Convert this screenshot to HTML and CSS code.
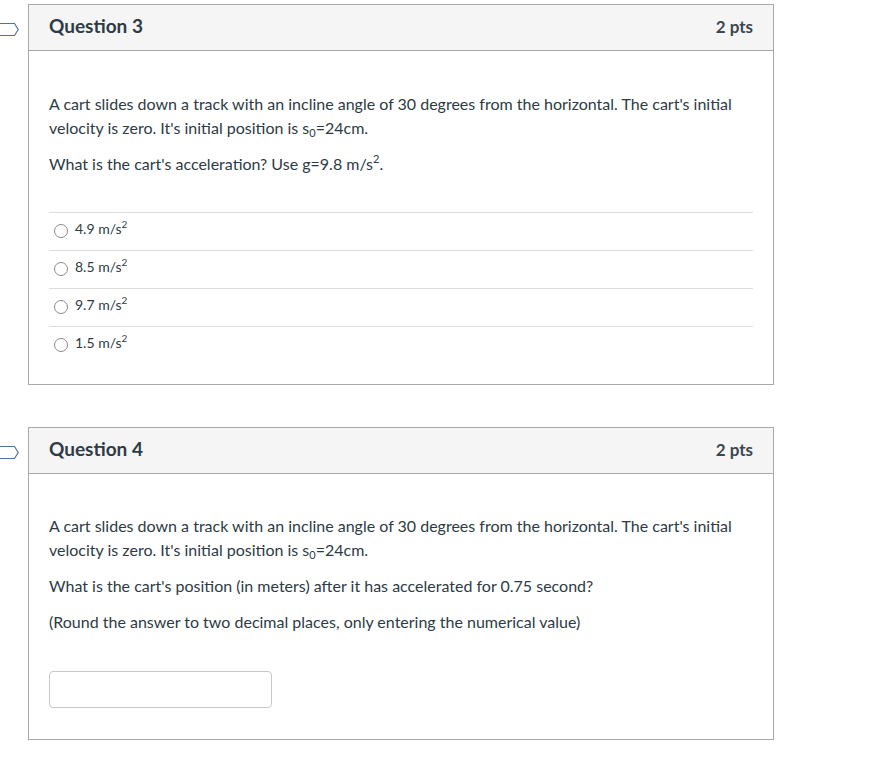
FILE: index.html
```html
<!DOCTYPE html>
<html>
<head>
<meta charset="utf-8">
<link rel="stylesheet" href="styles.css">
</head>
<body>
<div class="page">
  <div class="question-wrap">
    <svg class="marker" width="20" height="16" viewBox="0 0 20 16"><path d="M0 1.5 H14.5 L18.2 7.5 L14.5 13.5 H0" fill="none" stroke="#4f7396" stroke-width="1.2"/></svg>
    <div class="question">
      <div class="q-header">
        <span class="q-name">Question 3</span>
        <span class="q-pts">2 pts</span>
      </div>
      <div class="q-body">
        <p>A cart slides down a track with an incline angle of 30 degrees from the horizontal. The cart's initial velocity is zero. It's initial position is s<sub>0</sub>=24cm.</p>
        <p>What is the cart's acceleration? Use g=9.8 m/s<sup>2</sup>.</p>
        <div class="answers">
          <div class="answer"><span class="radio"></span><span class="label">4.9 m/s<sup>2</sup></span></div>
          <div class="answer"><span class="radio"></span><span class="label">8.5 m/s<sup>2</sup></span></div>
          <div class="answer"><span class="radio"></span><span class="label">9.7 m/s<sup>2</sup></span></div>
          <div class="answer"><span class="radio"></span><span class="label">1.5 m/s<sup>2</sup></span></div>
        </div>
      </div>
    </div>
  </div>

  <div class="question-wrap second">
    <svg class="marker" width="20" height="16" viewBox="0 0 20 16"><path d="M0 1.5 H14.5 L18.2 7.5 L14.5 13.5 H0" fill="none" stroke="#4f7396" stroke-width="1.2"/></svg>
    <div class="question">
      <div class="q-header">
        <span class="q-name">Question 4</span>
        <span class="q-pts">2 pts</span>
      </div>
      <div class="q-body short">
        <p>A cart slides down a track with an incline angle of 30 degrees from the horizontal. The cart's initial velocity is zero. It's initial position is s<sub>0</sub>=24cm.</p>
        <p>What is the cart's position (in meters) after it has accelerated for 0.75 second?</p>
        <p>(Round the answer to two decimal places, only entering the numerical value)</p>
        <div class="input-row"><div class="text-input"></div></div>
      </div>
    </div>
  </div>
</div>
</body>
</html>
```

FILE: styles.css
```css
html, body {
  margin: 0;
  padding: 0;
  background: #ffffff;
}
body {
  font-family: Lato, "Open Sans", sans-serif;
  color: #2d3b45;
}
.page {
  padding-top: 4px;
  width: 889px;
}
.question-wrap {
  position: relative;
  padding-left: 28px;
  width: 746px;
}
.question-wrap.second {
  margin-top: 42px;
}
.marker {
  position: absolute;
  left: 0;
  top: 18px;
}
.question {
  border: 1px solid #a9a9a9;
  background: #fff;
}
.q-header {
  display: flex;
  justify-content: space-between;
  align-items: center;
  padding: 0 20px 5px 20px;
  box-sizing: border-box;
  height: 46px;
  background: #f5f5f5;
  border-bottom: 1px solid #a9a9a9;
  font-weight: 700;
}
.q-name {
  font-size: 19px;
}
.q-pts {
  font-size: 17px;
  color: #3a4750;
  padding-top: 2px;
}
.q-body {
  padding: 41px 20px 20px 20px;
  font-size: 16px;
  line-height: 24px;
}
.q-body.short {
  padding-top: 40px;
}
.q-body p {
  margin: 0 0 12px 0;
}
sub {
  font-size: 11px;
  line-height: 0;
  vertical-align: -3px;
}
sup {
  font-size: 11px;
  line-height: 0;
  vertical-align: 7px;
}
.answers {
  margin-top: 36px;
}
.answer {
  display: flex;
  align-items: center;
  height: 37px;
  border-top: 1px solid #dcdcdc;
  font-size: 14px;
  padding-left: 5px;
  gap: 7px;
}
.label {
  padding-bottom: 6px;
}
.answer sup {
  font-size: 10px;
  vertical-align: 6px;
}
.radio {
  width: 12px;
  height: 12px;
  border: 1px solid #8a8a8a;
  border-radius: 50%;
  background: #fff;
  margin-bottom: 2px;
}
.input-row {
  margin-top: 37px;
  padding-bottom: 11px;
}
.text-input {
  width: 221px;
  height: 35px;
  border: 1px solid #c7c7c7;
  border-radius: 4px;
}
```
